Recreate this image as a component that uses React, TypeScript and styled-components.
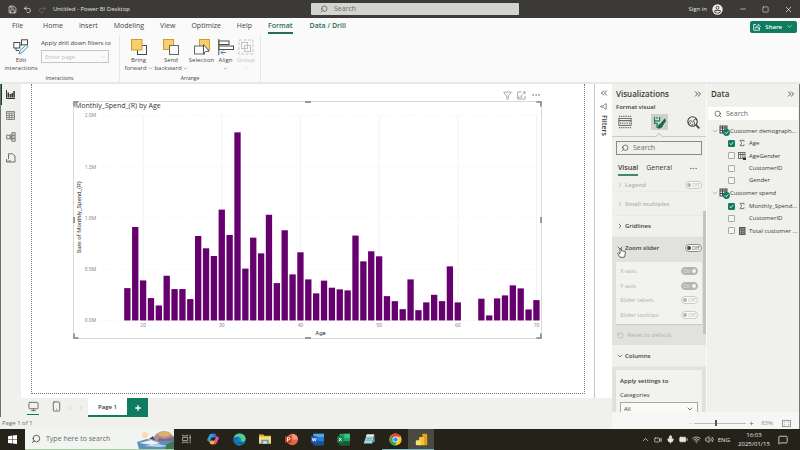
import React from 'react';
import styled, { createGlobalStyle, css } from 'styled-components';
import {
  ChevronDown, ChevronRight, ChevronUp, ChevronsLeft, ChevronsRight, Search, Save, Undo2, Redo2,
  Minus, Square, X, Plus, Ellipsis, Filter, Monitor, Smartphone, RotateCcw, MessageSquare,
  Volume2, Wifi, Mic, BatteryMedium, Video, Sigma, ChevronLeft,
} from 'lucide-react';

const Global = createGlobalStyle`
  * { box-sizing: border-box; }
  body { margin: 0; font-family: "Open Sans", "Noto Sans", sans-serif; font-size: 7px; line-height: 10px; color: #3a3a38; }
  button, input, select { font: inherit; color: inherit; margin: 0; padding: 0; border: 0; background: none; }
  h1, h2, h3, p, ul { margin: 0; padding: 0; font-size: inherit; font-weight: inherit; list-style: none; }
  svg { display: block; flex: none; }
`;

const green = '#0f7b60';

const Shell = styled.div`
  display: flex;
  flex-direction: column;
  height: 100vh;
  overflow: hidden;
  background: #f0f0ed;
`;

/* Title bar */
const TitleBar = styled.header`
  display: grid;
  grid-template-columns: 311px minmax(0, 1fr) 281px;
  align-items: center;
  height: 18px;
  background: #3b3a36;
  color: #e4e4e0;
`;
const TitleLeft = styled.div`
  display: flex;
  align-items: center;
  gap: 6px;
  padding-left: 8px;
`;
const TitleRight = styled.div`
  display: flex;
  align-items: center;
  justify-content: flex-end;
  padding-right: 7px;
`;
const WindowButtons = styled.div`
  display: flex;
  gap: 15px;
  padding-left: 16px;
`;
const IconButton = styled.button<{ $tone?: string }>`
  display: flex;
  align-items: center;
  justify-content: center;
  color: ${p => p.$tone ?? 'inherit'};
`;
const AppName = styled.h1`
  font-size: 6px;
  white-space: nowrap;
`;
const TopSearch = styled.label`
  display: flex;
  align-items: center;
  gap: 6px;
  height: 12px;
  padding-left: 9px;
  background: #d3d3cf;
  border-radius: 1px;
  color: #4a4a47;
`;
const MirroredSearch = styled(Search)`
  transform: scaleX(-1);
`;
const SideFunnel = styled(Filter)`
  transform: rotate(90deg);
`;
const BareInput = styled.input`
  flex: 1;
  min-width: 0;
  outline: 0;
  &::placeholder { color: #6a6a67; opacity: 1; }
`;
const SignIn = styled.button`
  display: flex;
  align-items: center;
  gap: 5px;
  font-size: 6px;
`;

/* Menu */
const Menu = styled.nav`
  display: flex;
  align-items: center;
  height: 17px;
  padding: 0 3px 0 12px;
  background: #fafafa;
`;
const MenuItem = styled.button<{ $accent?: boolean; $current?: boolean; $gap: number }>`
  height: 14px;
  margin-right: ${p => p.$gap}px;
  font-size: 7px;
  font-weight: ${p => (p.$accent ? 600 : 400)};
  color: ${p => (p.$accent ? '#2c6b5c' : '#454543')};
  border-bottom: 2px solid ${p => (p.$current ? '#2c6b5c' : 'transparent')};
  white-space: nowrap;
`;
const ShareButton = styled.button`
  display: flex;
  align-items: center;
  gap: 4px;
  height: 12px;
  margin-left: auto;
  padding: 0 4px 0 3px;
  font-size: 6px;
  font-weight: 600;
  color: #fff;
  background: ${green};
  border-radius: 2px;
`;

/* Ribbon */
const Ribbon = styled.section`
  display: flex;
  height: 49px;
  background: #fafafa;
  border-bottom: 2px solid #e8e8e7;
  font-size: 6px;
  line-height: 8px;
`;
const Group = styled.div<{ $w: number }>`
  display: flex;
  flex-direction: column;
  width: ${p => p.$w}px;
  border-right: 1px solid #e6e6e4;
`;
const GroupBody = styled.div`
  display: flex;
  flex: 1;
  padding: 4px 0 0 1px;
`;
const GroupName = styled.p`
  font-size: 5px;
  line-height: 7px;
  text-align: center;
`;
const Tool = styled.button<{ $w: number; $off?: boolean }>`
  display: flex;
  flex-direction: column;
  align-items: center;
  width: ${p => p.$w}px;
  white-space: nowrap;
  color: ${p => (p.$off ? '#c3c3c1' : '#4a4a48')};
  svg { margin-bottom: 1px; }
`;
const ToolLine = styled.span`
  display: flex;
  align-items: center;
  gap: 1px;
  min-height: 8px;
  svg { margin: 0; }
`;
const DrillField = styled.label`
  display: flex;
  flex-direction: column;
  gap: 3px;
  white-space: nowrap;
`;
const DrillBox = styled.span`
  display: flex;
  align-items: center;
  width: 68px;
  padding-right: 2px;
  border: 1px solid #c6c6c4;
  color: #c2c2c0;
`;
const PlainSelect = styled.select`
  flex: 1;
  min-width: 0;
  height: 11px;
  padding-left: 3px;
  appearance: none;
  opacity: 1;
`;

/* Work area */
const Work = styled.main`
  display: flex;
  flex: 1;
  min-height: 0;
`;
const LeftSide = styled.div`
  display: flex;
  flex-direction: column;
  flex: 1;
  min-width: 0;
`;
const LeftTop = styled.div`
  display: flex;
  flex: 1;
  min-height: 0;
`;
const Rail = styled.nav`
  display: flex;
  flex-direction: column;
  width: 21px;
  border-left: 1px solid #6d6d69;
  background: #f0f0ed;
`;
const RailButton = styled.button<{ $current?: boolean }>`
  display: flex;
  align-items: center;
  justify-content: center;
  height: 21px;
  padding-right: 2px;
  color: #6e6e6b;
  border-left: 1px solid ${p => (p.$current ? '#0b3f33' : 'transparent')};
`;
const Canvas = styled.section`
  flex: 1;
  min-width: 0;
  padding: 0 9px 4px 10px;
  background: #fff;
`;
const Page = styled.div`
  height: 100%;
  padding: 5px 42px 0 41px;
  border: 1px dotted #777775;
  border-top: 0;
`;
const VisualActions = styled.div`
  display: flex;
  justify-content: flex-end;
  gap: 5px;
  height: 12px;
  padding-right: 1px;
  color: #8b8b89;
`;
const Visual = styled.article`
  position: relative;
  border: 1px solid #d9d9d7;
`;
const VisualTitle = styled.h2`
  padding: 0 1px;
  font-size: 7px;
  line-height: 8px;
  color: #333;
`;
const Handle = styled.i<{ $x: string; $y: string; $w: number; $h: number }>`
  position: absolute;
  left: ${p => p.$x};
  top: ${p => p.$y};
  width: ${p => p.$w}px;
  height: ${p => p.$h}px;
  background: #9a9a98;
  transform: translate(-50%, -50%);
`;
const Plot = styled.svg`
  width: 100%;
  height: auto;
  text { font-family: Roboto, sans-serif; }
`;
const FilterPane = styled.aside`
  display: flex;
  flex-direction: column;
  align-items: center;
  gap: 5px;
  width: 18px;
  padding-top: 4px;
  background: #fff;
  border-left: 1px solid #c4c4c2;
`;
const VerticalLabel = styled.h2`
  writing-mode: vertical-rl;
  font-size: 7px;
  font-weight: 600;
  line-height: 10px;
`;
const PageTabs = styled.nav`
  display: flex;
  align-items: stretch;
  height: 19px;
  padding-left: 20px;
  border-left: 1px solid #6d6d69;
`;
const ViewButton = styled.button<{ $current?: boolean }>`
  display: flex;
  align-items: center;
  justify-content: center;
  width: 12px;
  height: 17px;
  margin: 0 5px 0 6px;
  color: #666664;
  border-bottom: 1px solid ${p => (p.$current ? green : 'transparent')};
`;
const PageArrows = styled.div`
  display: flex;
  align-items: center;
  gap: 5px;
  width: 21px;
  color: #bcbcba;
`;
const PageTab = styled.button`
  width: 39px;
  font-size: 6px;
  font-weight: 600;
  background: #fff;
  border-bottom: 2px solid ${green};
`;
const AddPage = styled.button`
  display: flex;
  align-items: center;
  justify-content: center;
  width: 21px;
  color: #fff;
  background: ${green};
`;
const PageStatus = styled.p`
  height: 12px;
  padding-left: 2px;
  font-size: 6px;
  line-height: 12px;
  color: #6b6b69;
`;

/* Right side */
const RightSide = styled.div`
  display: flex;
  flex-direction: column;
  width: 188px;
  border-right: 1px solid #77776f;
`;
const Panes = styled.div`
  display: flex;
  flex: 1;
  min-height: 0;
`;
const VizPane = styled.aside`
  display: flex;
  flex-direction: column;
  width: 95px;
  overflow: hidden;
  border-right: 1px solid #fafaf9;
`;
const PaneHead = styled.header`
  display: flex;
  align-items: center;
  justify-content: space-between;
  height: 19px;
  padding: 0 3px 0 4px;
  font-size: 8px;
  font-weight: 600;
`;
const SubTitle = styled.h3`
  padding-left: 4px;
  font-size: 6px;
  font-weight: 600;
  line-height: 8px;
`;
const FormatModes = styled.div`
  position: relative;
  display: flex;
  justify-content: space-between;
  height: 26px;
  padding: 3px 4px 6px;
  border-bottom: 1px solid #c9c9c6;
`;
const ModeButton = styled.button<{ $current?: boolean }>`
  display: flex;
  align-items: center;
  justify-content: center;
  width: 17px;
  height: 16px;
  background: ${p => (p.$current ? '#cfcfcb' : 'transparent')};
`;
const Notch = styled.i`
  position: absolute;
  left: 50%;
  bottom: -4px;
  width: 6px;
  height: 6px;
  margin-left: -3px;
  background: #f0f0ed;
  border: solid #c9c9c6;
  border-width: 1px 0 0 1px;
  transform: rotate(45deg);
`;
const PaneSearch = styled.label<{ $boxed?: boolean }>`
  display: flex;
  align-items: center;
  gap: 4px;
  height: ${p => (p.$boxed ? 14 : 13)}px;
  padding-left: ${p => (p.$boxed ? 4 : 6)}px;
  background: ${p => (p.$boxed ? 'transparent' : '#fff')};
  border: ${p => (p.$boxed ? '1px solid #8a8a88' : '0')};
  margin: ${p => (p.$boxed ? '4px 4px 0' : '4px 1px')};
`;
const Tabs = styled.div`
  display: flex;
  align-items: center;
  gap: 8px;
  height: 19px;
  margin-top: 4px;
  padding: 0 8px 0 6px;
`;
const Tab = styled.button<{ $current?: boolean }>`
  height: 14px;
  font-weight: ${p => (p.$current ? 600 : 400)};
  border-bottom: 2px solid ${p => (p.$current ? '#3a8a74' : 'transparent')};
`;
const More = styled(IconButton)`
  margin-left: auto;
`;
const Cards = styled.div`
  position: relative;
  flex: 1;
  min-height: 0;
  overflow: hidden;
`;
const Card = styled.div<{ $h: number; $off?: boolean; $open?: boolean }>`
  display: flex;
  align-items: center;
  gap: 1px;
  height: ${p => p.$h}px;
  padding: 0 4px;
  font-size: 6px;
  font-weight: 600;
  color: ${p => (p.$off ? '#b2b2af' : '#3d3d3b')};
  background: ${p => (p.$open ? '#e1e1de' : 'transparent')};
  border-bottom: 1px solid ${p => (p.$open ? 'transparent' : '#eaeae7')};
`;
const CardToggle = styled.button`
  display: flex;
  align-items: center;
  gap: 1px;
  flex: 1;
  white-space: nowrap;
`;
const Section = styled.div`
  padding: 3px 4px 0;
  background: #e1e1de;
`;
const SectionBody = styled.div<{ $pad: string }>`
  padding: ${p => p.$pad};
  font-size: 6px;
  background: #f2f2ef;
  box-shadow: 0 1px 1px #c8c8c4;
`;
const SettingRow = styled.div`
  display: flex;
  align-items: center;
  justify-content: space-between;
  color: #b0b0ad;
`;
const Settings = styled.div`
  display: grid;
  height: 58px;
`;
const ResetButton = styled.button`
  display: flex;
  align-items: center;
  gap: 3px;
  height: 21px;
  padding: 1px 1px 0;
  font-size: 6px;
  color: #b0b0ad;
`;
const Scroll = styled.i`
  position: absolute;
  top: 33px;
  right: 0;
  width: 3px;
  height: 123px;
  background: #c4c4c1;
`;
const SwitchBox = styled.label<{ $on?: boolean; $off?: boolean }>`
  position: relative;
  display: flex;
  align-items: center;
  gap: 1px;
  width: 17px;
  height: 8px;
  padding: 0 1px;
  border: 1px solid ${p => (p.$on ? '#b4b4b1' : p.$off ? '#cbcbc8' : '#8c8c8a')};
  border-radius: 4px;
  font-size: 5px;
  font-weight: 400;
  line-height: 6px;
  color: ${p => (p.$on ? '#e5e5e2' : p.$off ? '#b4b4b1' : '#444')};
  background: ${p => (p.$on ? '#b4b4b1' : '#fafaf9')};
  ${p => p.$on && css`flex-direction: row-reverse; justify-content: space-between;`}
  input { position: absolute; inset: 0; margin: 0; opacity: 0; width: 100%; height: 100%; }
  i { flex: none; width: 4px; height: 4px; border-radius: 50%; background: ${p => (p.$on ? '#f2f2ef' : 'currentColor')}; }
`;
const SettingsTitle = styled.h3`
  font-weight: 600;
  line-height: 10px;
`;
const CategoryField = styled.label`
  display: flex;
  flex-direction: column;
  gap: 2px;
  margin-top: 4px;
`;
const SelectWrap = styled.span`
  display: flex;
  align-items: center;
  padding-right: 3px;
  border: 1px solid #a8a8a5;
  background: #fafaf9;
`;
const DataPane = styled.aside`
  flex: 1;
  min-width: 0;
`;
const Tree = styled.ul`
  display: grid;
  height: 113px;
  font-size: 6px;
`;
const TableRow = styled.li`
  display: flex;
  align-items: center;
  padding-left: 4px;
  white-space: nowrap;
`;
const Field = styled.li`
  padding-left: 21px;
`;
const FieldLabel = styled.label`
  display: grid;
  grid-template-columns: 7px 8px 1fr;
  gap: 3px;
  align-items: center;
  height: 100%;
  white-space: nowrap;
  svg { justify-self: center; }
`;
const Tick = styled.input`
  width: 7px;
  height: 7px;
  appearance: none;
  border: 1px solid #a9a9a6;
  border-radius: 1px;
  background: #f6f6f4;
  &:checked {
    border-color: ${green};
    background: ${green};
  }
`;
const TickCell = styled.span`
  position: relative;
  display: flex;
  svg { position: absolute; inset: 1px; pointer-events: none; }
`;
const ZoomBar = styled.div`
  display: flex;
  align-items: center;
  justify-content: flex-end;
  gap: 3px;
  height: 17px;
  padding: 5px 8px 0 0;
  font-size: 6px;
  color: #8b8b89;
  background: #f6f6f4;
`;
const ZoomRange = styled.input`
  width: 52px;
  height: 8px;
  appearance: none;
  background: linear-gradient(#bdbdbb, #bdbdbb) center / 100% 1px no-repeat;
  &::-webkit-slider-thumb {
    appearance: none;
    width: 2px;
    height: 6px;
    background: #555;
  }
`;
const ZoomValue = styled.span`
  padding: 0 6px 0 4px;
`;

/* Taskbar */
const Taskbar = styled.footer`
  display: flex;
  height: 21px;
  background: #25221a;
  color: #e6e6e2;
`;
const StartButton = styled.button`
  display: flex;
  align-items: center;
  justify-content: center;
  width: 25px;
`;
const TaskSearch = styled.label`
  display: flex;
  align-items: center;
  gap: 5px;
  width: 149px;
  padding-left: 6px;
  color: #444;
  background: #f2f4f1;
  border-bottom: 1px solid #a9cf9f;
`;
const TaskButton = styled.button<{ $open?: boolean; $active?: boolean }>`
  display: flex;
  align-items: center;
  justify-content: center;
  width: 26px;
  border-bottom: 1px solid ${p => (p.$open ? '#76b9c4' : 'transparent')};
  background: ${p => (p.$active ? '#4b4941' : 'transparent')};
`;
const Tray = styled.div`
  display: flex;
  align-items: center;
  gap: 4px;
  margin-left: auto;
  padding-right: 12px;
  font-size: 6px;
`;
const Clock = styled.time`
  display: flex;
  flex-direction: column;
  align-items: center;
  width: 40px;
  line-height: 9px;
`;

const bars: [number, number][] = [
  [18, 0.315], [19, 0.911], [20, 0.39], [21, 0.218], [22, 0.146], [23, 0.436], [24, 0.306], [25, 0.306],
  [26, 0.208], [27, 0.823], [28, 0.703], [29, 0.628], [30, 1.08], [31, 0.833], [32, 1.833], [33, 0.505],
  [34, 0.807], [35, 0.654], [36, 1.03], [37, 0.364], [38, 0.879], [39, 0.449], [40, 0.664], [41, 0.4],
  [42, 0.264], [43, 0.388], [44, 0.319], [45, 0.303], [46, 0.293], [47, 0.827], [48, 0.576], [49, 0.674],
  [50, 0.625], [51, 0.237], [52, 0.188], [53, 0.11], [54, 0.4], [55, 0.1], [56, 0.176], [57, 0.25],
  [58, 0.188], [59, 0.527], [60, 0.176], [63, 0.212], [64, 0.049], [65, 0.215], [66, 0.244], [67, 0.342],
  [68, 0.3125], [69, 0.107], [70, 0.198],
];
const xOf = (age: number) => 69 + (age - 20) * 7.85;
const yOf = (v: number) => 210 - v * 102.4;

function SpendChart() {
  return (
    <Plot viewBox="0 0 466 228" role="img" aria-label="Monthly spend by age">
      {[0, 0.5, 1, 1.5, 2].map(v => (
        <g key={v}>
          <line x1="28" x2="464" y1={yOf(v)} y2={yOf(v)} stroke="#efefef" strokeDasharray="1 2" />
          <text x="22" y={yOf(v) + 2} fontSize="5" textAnchor="end" fill="#8c8c8c">{v.toFixed(1)}M</text>
        </g>
      ))}
      {[20, 30, 40, 50, 60, 70].map(a => (
        <g key={a}>
          <line x1={xOf(a)} x2={xOf(a)} y1="5" y2="210" stroke="#f3f3f3" />
          <text x={xOf(a)} y="217" fontSize="5" textAnchor="middle" fill="#8c8c8c">{a}</text>
        </g>
      ))}
      {bars.map(([a, v]) => (
        <rect key={a} x={xOf(a) - 3.2} y={yOf(v)} width="6.3" height={v * 102.4} fill="#66006e" />
      ))}
      <text x="246" y="225" fontSize="6" textAnchor="middle" fill="#333">Age</text>
      <text transform="translate(7 107) rotate(-90)" fontSize="6" textAnchor="middle" fill="#333">Sum of Monthly_Spend_(R)</text>
    </Plot>
  );
}

const Svg = ({ s = 14, children, box = 16 }: { s?: number; box?: number; children: React.ReactNode }) => (
  <svg width={s} height={s} viewBox={`0 0 ${box} ${box}`} fill="none" stroke="currentColor" aria-hidden="true">{children}</svg>
);
const EditIcon = () => (
  <Svg s={16}>
    <rect x=".8" y="3.5" width="6" height="5.5" /><rect x="8.5" y=".8" width="6" height="5" />
    <path d="M6.8 6h2M3 9v2.5h3" /><path d="M6 15l1-3.2L13 5.6l2 2-6.2 6.2z" fill="#e9f4fb" stroke="#3c8fb8" />
  </Svg>
);
const BringIcon = () => (
  <Svg s={16}><rect x="6.5" y="6.5" width="9" height="9" fill="#fafafa" /><rect x=".5" y=".5" width="10.5" height="10.5" fill="#f9cf6d" stroke="#d39b2e" /></Svg>
);
const SendIcon = () => (
  <Svg s={16}><rect x=".5" y=".5" width="10" height="10" fill="#f9cf6d" stroke="#d39b2e" /><rect x="6.5" y="6.5" width="9" height="9" fill="#fafafa" stroke="#666" /></Svg>
);
const SelectIcon = () => (
  <Svg s={16}>
    <rect x="5.5" y=".5" width="10" height="10" fill="#f9cf6d" stroke="#d39b2e" />
    <rect x=".5" y="7" width="10" height="8" fill="#fafafa" stroke="#666" /><path d="M9.5 5.5v9l2.2-2 3.6-.3z" fill="#fff" stroke="#555" />
  </Svg>
);
const AlignIcon = () => (
  <Svg s={16}><path d="M.8 0v16" /><rect x="1" y="2" width="10" height="3.5" fill="#fff" /><rect x="1" y="7" width="14.5" height="3.5" fill="#fff" /><path d="M8 13.5H3m2-2l-2 2 2 2" stroke="#3c8fb8" /></Svg>
);
const GroupIcon = () => (
  <Svg s={16}><path d="M1 1h14v14H1z" strokeDasharray="3 1.6" /><rect x="3.5" y="3.5" width="6" height="6" /><rect x="6.5" y="6.5" width="6" height="6" /></Svg>
);
const ShareIcon = () => (
  <Svg s={8}><path d="M6 3H1.5v11.5H13V10" strokeWidth="1.600" /><path d="M5 10.500c.5-3.500 2.500-5 5.500-5V2.500L15 7l-4.500 4V8.300C8 8.300 6.500 9 5 10.500z" strokeWidth="1.400" /></Svg>
);
const ReportIcon = () => (
  <Svg s={9} box={9}><path d="M.5 0v8.5H9" stroke="#333" /><path d="M2.3 2.5v5M4.4 4v3.5M6.3 3v4.5M8.1 1v6.5" stroke="#333" strokeWidth="1.5" /></Svg>
);
const TableIcon = () => (
  <Svg s={9} box={9}><path d="M.5.5h8v8h-8zM.5 2h8M.5 4.300h8M.5 6.400h8M3.200 2v6.500M5.800 2v6.500" strokeWidth=".8" /></Svg>
);
const ModelIcon = () => (
  <Svg s={10} box={11}><rect x=".8" y="3.5" width="3.7" height="4" /><path d="M4.5 5.5h2M5.5 2.5v6" /><rect x="6.5" y=".8" width="3.5" height="2.5" /><rect x="6.5" y="4.2" width="3.5" height="2.5" /><rect x="6.5" y="7.6" width="3.5" height="2.5" /></Svg>
);
const DaxIcon = () => (
  <Svg s={10} box={10}><path d="M2.5 6V.8h4L9 3v6H6" /><path d="M.5 6v3H6M2 9V7.5M4 9V7" /></Svg>
);
const BuildIcon = () => (
  <Svg s={14}><path d="M1 1.5h14M1 14.5h14" strokeDasharray="1.5 1" /><rect x="1" y="4" width="14" height="8" strokeWidth=".8" /><path d="M1 6.500h14" /><path d="M3 8.500v2M5.500 8.500v2M8 8.500v2M10.500 8.500v2M13 8.500v2" strokeWidth=".8" /></Svg>
);
const FormatIcon = () => (
  <Svg s={13}>
    <path d="M2 1v5h6V1M5 1v3M2 6v3h3v5l3 1" stroke="#217a62" strokeWidth="1.6" fill="#f4f7f4" />
    <path d="M14.5 3.5L9 10c-2 0-2.5 2-2.8 4.5C9.5 15 11.5 14 11.5 12L15.5 6z" fill="#12674f" stroke="#12674f" />
  </Svg>
);
const AnalyticsIcon = () => (
  <Svg s={13}><circle cx="6.8" cy="6.8" r="5.8" strokeWidth="1.3" /><path d="M10.8 10.8L15.2 15.2" strokeWidth="2" /><path d="M1.5 8l3-2.5 2.5 2 3-4 2.5 1.5M4 10V8M6.5 12V9.5M9 11V7" /></Svg>
);
const TableBadge = () => (
  <Svg s={11} box={11}>
    <rect x="1" y="1" width="7" height="7" stroke="#444" /><path d="M1 3h7M1 5.5h7M3.5 1v7M6 1v7" stroke="#444" />
    <circle cx="7.5" cy="7.5" r="3.4" fill={green} stroke="none" /><path d="M6 7.5l1.2 1.2 2-2.3" stroke="#fff" strokeWidth=".9" />
  </Svg>
);
const GroupField = () => (
  <Svg s={8} box={8}><rect x=".5" y=".5" width="6.5" height="6" stroke="#555" strokeWidth=".8" /><path d="M.5 2.5H7M2.6 1v5.5M4.8 1v5.5" stroke="#555" strokeWidth=".8" /><path d="M5 5.5h3V8H5z" fill="#333" stroke="none" /></Svg>
);
const CalcIcon = () => (
  <Svg s={8} box={8}><rect x="1" y="0" width="6.5" height="8" fill="#555" stroke="none" /><path d="M2 2h4.5M2 4.2h4.5M2 6.2h4.5" stroke="#ddd" strokeDasharray="1 .7" /></Svg>
);
const PersonIcon = () => (
  <Svg s={11}><circle cx="8" cy="8" r="7.5" fill="#f2f2ee" stroke="none" /><circle cx="8" cy="5.5" r="2.2" stroke="#333" strokeWidth="1.3" /><path d="M4 12V9.5h8V12c-2 1.6-6 1.6-8 0z" stroke="#333" strokeWidth="1.3" /></Svg>
);
const FocusIcon = () => (
  <Svg s={9} box={10}><path d="M5 1H.8v8H9V5.5M.8 7H5V4.5M6 4l3-3M6.5 1H9v2.5" strokeWidth=".8" /></Svg>
);
const HandCursor = styled.svg`
  position: absolute;
  left: 5px;
  top: 70px;
`;

const taskIcons: { name: string; open?: boolean; active?: boolean; art: React.ReactNode }[] = [
  { name: 'Task view', art: <Svg s={10}><path d="M1 1v2h8V1M1 15v-2h8v2M1 5.5h8v5H1zM13 1v14M11.5 5.5h3" /></Svg> },
  { name: 'Copilot', art: (
    <Svg s={12}><g stroke="none"><path d="M5 1h5c2 0 2 2 3 4l-3 1H6L4 11H2C0 11 0 9 1 7l2-4c.5-1 1-2 2-2z" fill="#2f9be0" /><path d="M11 15H6c-2 0-2-2-3-4l3-1h4l2-5h2c2 0 2 2 1 4l-2 4c-.5 1-1 2-2 2z" fill="#e8568c" /><path d="M3 11l3-1h4l-1 5H6c-2 0-2-2-3-4z" fill="#f5b13d" /><path d="M8 1h2c2 0 2 2 3 4h-3z" fill="#5a55d8" /><path d="M7 6h3L9 10H6z" fill="#2a2030" /></g></Svg>) },
  { name: 'Edge', art: (
    <Svg s={13}><g stroke="none"><circle cx="8" cy="8" r="7.5" fill="#1b84d2" /><path d="M.6 7C1.5 2.5 5 .5 8 .5c5 0 7.5 3.5 7.5 6.5 0 2.5-2 3.5-4 3.5-1.5 0-2-.7-1.5-1.5C11 6.5 8 4.5 5 5 2.5 5.3 1 6.5.6 7z" fill="#4fd08c" /><path d="M.6 7C2 4.5 6 3.5 8.500 6 6 6 5 8 5.500 10.500c.5 2.500 2.500 4 5 4.400C5 17 0 12.500.6 7z" fill="#1670b8" /><path d="M6.8 8.5c0 3 3 4.2 6.5 3-1.2 1.8-3 2.500-4 2.300C7 13 6 10.500 6.800 8.500z" fill="#25221a" opacity=".6" /></g></Svg>) },
  { name: 'File Explorer', art: (
    <Svg s={12}><g stroke="none"><path d="M0 2h6l1 1.5h9V14H0z" fill="#e6ae35" /><path d="M0 5h16v9H0z" fill="#fbdc77" /><path d="M3 9h10v5H3z" fill="#4aa3d8" /><path d="M5.5 11h5v3h-5z" fill="#f8e6a4" /></g></Svg>) },
  { name: 'PowerPoint', art: (
    <Svg s={13}><g stroke="none"><circle cx="9" cy="8" r="7" fill="#e2664a" /><path d="M9 1a7 7 0 0 1 7 7H9z" fill="#f49a7c" /><rect y="4" width="8" height="8" rx="1" fill="#bf3b22" /></g><path d="M3 10.5v-5h1.6a1.5 1.5 0 0 1 0 3H3" stroke="#fff" strokeWidth="1.2" /></Svg>) },
  { name: 'Word', art: (
    <Svg s={13}><g stroke="none"><rect x="3" y="1" width="13" height="14" rx="1" fill="#2b7cd3" /><path d="M3 1h13v4H3z" fill="#52a8ea" /><path d="M3 10h13v5H3z" fill="#1c4f9c" /><rect y="4" width="8" height="8" rx="1" fill="#1a5abd" /></g><path d="M1.5 6l1.2 4L4 6.5 5.3 10 6.5 6" stroke="#fff" /></Svg>) },
  { name: 'Excel', art: (
    <Svg s={13}><g stroke="none"><rect x="3" y="1" width="13" height="14" rx="1" fill="#21a366" /><path d="M9 1h7v5H9z" fill="#39c481" /><path d="M3 10h13v5H3z" fill="#185c37" /><rect y="4" width="8" height="8" rx="1" fill="#107c41" /></g><path d="M2.3 6l3.4 4M5.7 6l-3.4 4" stroke="#fff" strokeWidth="1.2" /></Svg>) },
  { name: 'Notepad', art: (
    <Svg s={12}><g stroke="none"><path d="M5 2h10l-3 12H1z" fill="#a9d5da" /><path d="M5 2h10l-.6 2.2H4.2z" fill="#e8f3f2" /><path d="M12 14l3-12 .8 9z" fill="#6d9aa2" /></g><path d="M5 7h7M4 9.5h7" stroke="#5f99a4" /></Svg>) },
  { name: 'Chrome', open: true, art: (
    <Svg s={13}><g stroke="none"><circle cx="8" cy="8" r="7.5" fill="#f7c92d" /><path d="M8 8L1.500 4.300A7.500 7.500 0 0 1 14.500 4.500H8z" fill="#e0483a" /><path d="M1.500 4.300A7.500 7.500 0 0 0 7.300 15.500L10.500 10 8 8z" fill="#35a552" /><circle cx="8" cy="8" r="3.6" fill="#fff" /><circle cx="8" cy="8" r="2.8" fill="#4388ee" /></g></Svg>) },
  { name: 'Power BI', open: true, active: true, art: (
    <Svg s={13}><g stroke="none"><rect x="9" y="1" width="6" height="14" rx="1" fill="#e0a21a" /><rect x="5" y="5" width="6" height="10" rx="1" fill="#f3c433" /><rect x="1" y="9" width="6" height="6" rx="1" fill="#f9e070" /></g></Svg>) },
];

const Scenery = () => (
  <svg width="37" height="20" viewBox="0 0 37 20" aria-hidden="true">
    <circle cx="8" cy="6" r="3" fill="#f7dcb4" />
    <path d="M14 13l5-8 6-3 7 1 5 5v6z" fill="#b48a8c" /><path d="M20 6l5-4 7 1 2 3-6 2z" fill="#d9b36c" />
    <path d="M22 9l6 1 9-2v6H20z" fill="#7c6a86" /><path d="M0 13l10-3 10 2 17 0v8H2z" fill="#5b8fc0" />
    <path d="M2 14l12-3 9 3-8 2z" fill="#eef2f5" /><path d="M12 10l4-3 2 4z" fill="#45445c" /><path d="M6 17l14-2 12 2-10 1z" fill="#b8d6ea" />
    <path d="M30 15l7-3v8h-9z" fill="#3f7a58" />
  </svg>
);

function Toggle({ name, on, off }: { name: string; on?: boolean; off?: boolean }) {
  return (
    <SwitchBox $on={on} $off={off}>
      <input type="checkbox" role="switch" aria-label={name} defaultChecked={on} disabled={off} />
      <i /><span>{on ? 'On' : 'Off'}</span>
    </SwitchBox>
  );
}

function FieldRow({ name, checked, icon }: { name: string; checked?: boolean; icon?: React.ReactNode }) {
  return (
    <Field>
      <FieldLabel>
        <TickCell>
          <Tick type="checkbox" defaultChecked={checked} />
          {checked && <Svg s={5} box={8}><path d="M1 4l2 2 4-4.5" stroke="#fff" strokeWidth="1.4" /></Svg>}
        </TickCell>
        {icon ?? <span />}
        <span>{name}</span>
      </FieldLabel>
    </Field>
  );
}

const menu: [string, number][] = [['File', 20], ['Home', 16], ['Insert', 16], ['Modeling', 16], ['View', 16], ['Optimize', 16], ['Help', 16]];

export default function App() {
  return (
    <Shell>
      <Global />
      <TitleBar>
        <TitleLeft>
          <IconButton aria-label="Save"><Save size={9} /></IconButton>
          <IconButton aria-label="Undo"><Undo2 size={9} /></IconButton>
          <IconButton aria-label="Redo" $tone="#6c6b66"><Redo2 size={9} /></IconButton>
          <AppName>Untitled - Power BI Desktop</AppName>
        </TitleLeft>
        <TopSearch>
          <MirroredSearch size={8} />
          <BareInput type="search" placeholder="Search" aria-label="Search" />
        </TopSearch>
        <TitleRight>
          <SignIn>Sign in <PersonIcon /></SignIn>
          <WindowButtons>
            <IconButton aria-label="Minimize"><Minus size={8} /></IconButton>
            <IconButton aria-label="Maximize"><Square size={7} /></IconButton>
            <IconButton aria-label="Close"><X size={9} /></IconButton>
          </WindowButtons>
        </TitleRight>
      </TitleBar>

      <Menu>
        {menu.map(([m, g]) => <MenuItem key={m} $gap={g}>{m}</MenuItem>)}
        <MenuItem $accent $current $gap={17}>Format</MenuItem>
        <MenuItem $accent $gap={0}>Data / Drill</MenuItem>
        <ShareButton><ShareIcon />Share<ChevronDown size={7} /></ShareButton>
      </Menu>

      <Ribbon>
        <Group $w={120}>
          <GroupBody>
            <Tool $w={40}><EditIcon /><ToolLine>Edit</ToolLine><ToolLine>interactions</ToolLine></Tool>
            <DrillField>
              Apply drill down filters to
              <DrillBox>
                <PlainSelect disabled><option>Enter page</option></PlainSelect>
                <ChevronDown size={6} />
              </DrillBox>
            </DrillField>
          </GroupBody>
          <GroupName>Interactions</GroupName>
        </Group>
        <Group $w={141}>
          <GroupBody>
            <Tool $w={35}><BringIcon /><ToolLine>Bring</ToolLine><ToolLine>forward<ChevronDown size={5} /></ToolLine></Tool>
            <Tool $w={30}><SendIcon /><ToolLine>Send</ToolLine><ToolLine>backward<ChevronDown size={5} /></ToolLine></Tool>
            <Tool $w={31}><SelectIcon /><ToolLine>Selection</ToolLine></Tool>
            <Tool $w={17}><AlignIcon /><ToolLine>Align</ToolLine><ToolLine><ChevronDown size={5} /></ToolLine></Tool>
            <Tool $w={24} $off disabled><GroupIcon /><ToolLine>Group</ToolLine><ToolLine><ChevronDown size={5} /></ToolLine></Tool>
          </GroupBody>
          <GroupName>Arrange</GroupName>
        </Group>
      </Ribbon>

      <Work>
        <LeftSide>
          <LeftTop>
            <Rail>
              <RailButton $current aria-label="Report view"><ReportIcon /></RailButton>
              <RailButton aria-label="Table view"><TableIcon /></RailButton>
              <RailButton aria-label="Model view"><ModelIcon /></RailButton>
              <RailButton aria-label="DAX query view"><DaxIcon /></RailButton>
            </Rail>
            <Canvas>
              <Page>
                <VisualActions>
                  <IconButton aria-label="Filters"><Filter size={9} /></IconButton>
                  <IconButton aria-label="Focus mode"><FocusIcon /></IconButton>
                  <IconButton aria-label="More options"><Ellipsis size={10} /></IconButton>
                </VisualActions>
                <Visual>
                  <VisualTitle>Monthly_Spend_(R) by Age</VisualTitle>
                  <SpendChart />
                  <Handle $x="2px" $y="0" $w={5} $h={2} />
                  <Handle $x="0" $y="2px" $w={2} $h={5} />
                  <Handle $x="50%" $y="0" $w={6} $h={2} />
                  <Handle $x="calc(100% - 2px)" $y="0" $w={5} $h={2} />
                  <Handle $x="100%" $y="2px" $w={2} $h={5} />
                  <Handle $x="0" $y="50%" $w={2} $h={6} />
                  <Handle $x="100%" $y="50%" $w={2} $h={6} />
                  <Handle $x="2px" $y="100%" $w={5} $h={2} />
                  <Handle $x="0" $y="calc(100% - 2px)" $w={2} $h={5} />
                  <Handle $x="50%" $y="100%" $w={6} $h={2} />
                  <Handle $x="calc(100% - 2px)" $y="100%" $w={5} $h={2} />
                  <Handle $x="100%" $y="calc(100% - 2px)" $w={2} $h={5} />
                </Visual>
              </Page>
            </Canvas>
            <FilterPane>
              <IconButton aria-label="Expand filters"><ChevronsLeft size={10} /></IconButton>
              <SideFunnel size={7} />
              <VerticalLabel>Filters</VerticalLabel>
            </FilterPane>
          </LeftTop>
          <PageTabs>
            <ViewButton $current aria-label="Desktop layout"><Monitor size={11} /></ViewButton>
            <ViewButton aria-label="Mobile layout"><Smartphone size={11} /></ViewButton>
            <PageArrows><ChevronLeft size={6} /><ChevronRight size={6} /></PageArrows>
            <PageTab>Page 1</PageTab>
            <AddPage aria-label="New page"><Plus size={8} strokeWidth={4} /></AddPage>
          </PageTabs>
          <PageStatus>Page 1 of 1</PageStatus>
        </LeftSide>

        <RightSide>
          <Panes>
            <VizPane>
              <PaneHead><h2>Visualizations</h2><IconButton aria-label="Collapse visualizations"><ChevronsRight size={10} /></IconButton></PaneHead>
              <SubTitle>Format visual</SubTitle>
              <FormatModes>
                <ModeButton aria-label="Build visual"><BuildIcon /></ModeButton>
                <ModeButton $current aria-label="Format visual"><FormatIcon /></ModeButton>
                <ModeButton aria-label="Analytics"><AnalyticsIcon /></ModeButton>
                <Notch />
              </FormatModes>
              <PaneSearch $boxed><MirroredSearch size={8} /><BareInput type="search" placeholder="Search" aria-label="Search settings" /></PaneSearch>
              <Tabs>
                <Tab $current>Visual</Tab><Tab>General</Tab>
                <More aria-label="More settings" $tone="#777"><Ellipsis size={9} /></More>
              </Tabs>
              <Cards>
                <Card $h={14} $off><CardToggle><ChevronRight size={8} />Legend</CardToggle><Toggle name="Legend" off /></Card>
                <Card $h={24} $off><CardToggle><ChevronRight size={8} />Small multiples</CardToggle></Card>
                <Card $h={21}><CardToggle><ChevronRight size={8} />Gridlines</CardToggle></Card>
                <Card $h={22} $open><CardToggle><ChevronDown size={8} />Zoom slider</CardToggle><Toggle name="Zoom slider" /></Card>
                <Section>
                  <SectionBody $pad="2px 4px">
                    <Settings>
                      <SettingRow>X-axis<Toggle name="X-axis" on off /></SettingRow>
                      <SettingRow>Y-axis<Toggle name="Y-axis" on off /></SettingRow>
                      <SettingRow>Slider labels<Toggle name="Slider labels" off /></SettingRow>
                      <SettingRow>Slider tooltips<Toggle name="Slider tooltips" off /></SettingRow>
                    </Settings>
                  </SectionBody>
                  <ResetButton disabled><RotateCcw size={7} />Reset to default</ResetButton>
                </Section>
                <Card $h={22}><CardToggle><ChevronDown size={8} />Columns</CardToggle></Card>
                <Section>
                  <SectionBody $pad="6px 4px">
                    <SettingsTitle>Apply settings to</SettingsTitle>
                    <CategoryField>
                      Categories
                      <SelectWrap><PlainSelect><option>All</option></PlainSelect><ChevronDown size={8} /></SelectWrap>
                    </CategoryField>
                  </SectionBody>
                </Section>
                <Scroll />
                <HandCursor width="9" height="10" viewBox="0 0 9 10" aria-hidden="true">
                  <path d="M3 .8v5L1.5 4.8.8 5.500 3 9.300h4.300L8.300 6V3.500L4.500 2.800V.8z" fill="#fff" stroke="#444" strokeWidth=".8" />
                </HandCursor>
              </Cards>
            </VizPane>

            <DataPane>
              <PaneHead><h2>Data</h2><IconButton aria-label="Collapse data"><ChevronsRight size={10} /></IconButton></PaneHead>
              <PaneSearch><Search size={8} /><BareInput type="search" placeholder="Search" aria-label="Search data" /></PaneSearch>
              <Tree>
                <TableRow><ChevronDown size={8} color="#999" /><TableBadge />Customer demograph...</TableRow>
                <FieldRow name="Age" checked icon={<Sigma size={8} />} />
                <FieldRow name="AgeGender" icon={<GroupField />} />
                <FieldRow name="CustomerID" />
                <FieldRow name="Gender" />
                <TableRow><ChevronDown size={8} color="#999" /><TableBadge />Customer spend</TableRow>
                <FieldRow name="Monthly_Spend..." checked icon={<Sigma size={8} />} />
                <FieldRow name="CustomerID" />
                <FieldRow name="Total customer ..." icon={<CalcIcon />} />
              </Tree>
            </DataPane>
          </Panes>
          <ZoomBar>
            <span>-</span>
            <ZoomRange type="range" aria-label="Zoom" min={10} max={400} defaultValue={170} />
            <Plus size={5} strokeWidth={4} />
            <ZoomValue>83%</ZoomValue>
            <IconButton aria-label="Fit to page"><Svg s={9}><rect x="1" y="2.5" width="14" height="11" strokeWidth="1.5" /><path d="M4 7V5.5h2M12 7V5.5h-2M4 9v1.5h2M12 9v1.5h-2" /></Svg></IconButton>
          </ZoomBar>
        </RightSide>
      </Work>

      <Taskbar>
        <StartButton aria-label="Start">
          <Svg s={9} box={9}><path d="M0 1.2L4.2.6v3.7H0zM4.7.5L9 0v4.3H4.7zM0 4.8h4.2v3.7L0 7.900zM4.700 4.800H9V9l-4.300-.5z" fill="#fff" stroke="none" /></Svg>
        </StartButton>
        <TaskSearch>
          <MirroredSearch size={10} />
          <BareInput type="search" placeholder="Type here to search" aria-label="Type here to search" />
          <Scenery />
        </TaskSearch>
        {taskIcons.map(t => <TaskButton key={t.name} aria-label={t.name} $open={t.open} $active={t.active}>{t.art}</TaskButton>)}
        <Tray>
          <ChevronUp size={9} /><Video size={8} /><Mic size={9} fill="currentColor" /><BatteryMedium size={9} fill="currentColor" /><Wifi size={9} /><Volume2 size={9} />
          <span>ENG</span>
          <Clock><span>16:03</span><span>2025/01/15</span></Clock>
          <MessageSquare size={10} />
        </Tray>
      </Taskbar>
    </Shell>
  );
}
